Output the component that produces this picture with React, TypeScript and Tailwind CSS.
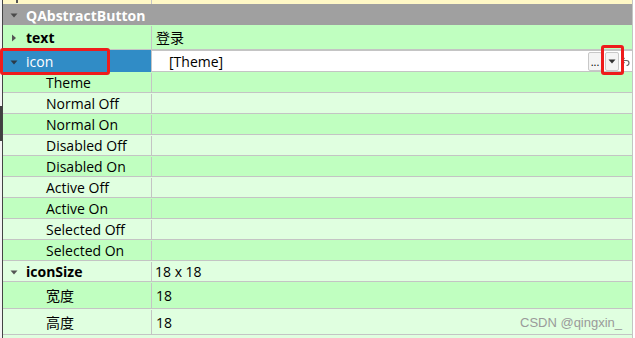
import React from "react";

type Arrow = "down" | "right" | null;

interface RowProps {
  label: string;
  value?: React.ReactNode;
  level?: number;
  bold?: boolean;
  dark?: boolean;
  arrow?: Arrow;
  h?: string;
}

const FONT = { fontFamily: '"Open Sans", "Noto Sans CJK SC", sans-serif' };

function Tri({ dir, color = "#555" }: { dir: "down" | "right"; color?: string }) {
  return (
    <svg width="8" height="8" viewBox="0 0 8 8" className="shrink-0">
      {dir === "down" ? (
        <path d="M0.5 2.5 L7.5 2.5 L4 6.5 Z" fill={color} />
      ) : (
        <path d="M2 0.5 L6 4 L2 7.5 Z" fill={color} />
      )}
    </svg>
  );
}

function Row({ label, value, level = 0, bold, dark, arrow = null, h = "h-[21px]" }: RowProps) {
  const bg = dark ? "bg-[#c0ffc0]" : "bg-[#e0ffe0]";
  return (
    <div className={`flex ${h} ${bg} border-b border-[#c4c4c4] pt-[1px] text-[14px] text-black`}>
      <div
        className={`flex w-[149px] shrink-0 items-center border-r border-[#c4c4c4] ${
          level === 0 ? "pl-[7px]" : "pl-[43px]"
        }`}
      >
        {level === 0 && (
          <span className="flex w-[16px] items-center">{arrow && <Tri dir={arrow} />}</span>
        )}
        <span className={bold ? "font-bold" : ""}>{label}</span>
      </div>
      <div className="flex flex-1 items-center pl-[3px]">{value}</div>
    </div>
  );
}

const iconStates = [
  "Theme",
  "Normal Off",
  "Normal On",
  "Disabled Off",
  "Disabled On",
  "Active Off",
  "Active On",
  "Selected Off",
  "Selected On",
];

export default function App() {
  return (
    <div className="relative flex h-[338px] w-[635px] overflow-hidden bg-white" style={FONT}>
      {/* left gutter */}
      <div className="flex w-[2px] shrink-0 flex-col bg-[#f4f4f4]">
        <div className="mt-[106px] h-[35px] bg-[#404040]" />
      </div>

      <div className="flex w-[631px] shrink-0 flex-col border-l border-r border-[#444] border-r-[#c4c4c4] bg-[#e0ffe0]">
        {/* partial row above */}
        <div className="flex h-[4px] bg-[#fff8c6]">
          <div className="w-[149px] border-r border-[#c4c4c4] pl-[13px]">
            <div className="h-[3px] w-[2px] bg-[#555]" />
          </div>
        </div>

        {/* group header */}
        <div className="flex h-[21px] items-center bg-[#a0a0a0] pl-[7px] pt-[1px] text-[14px] font-bold text-white">
          <span className="flex w-[16px] items-center">
            <Tri dir="down" color="#4a4a4a" />
          </span>
          QAbstractButton
        </div>

        <Row label="text" bold dark arrow="right" h="h-[25px]" value={<span className="pl-[1px]">登录</span>} />

        {/* selected icon row */}
        <div className="flex h-[22px] text-[14px]">
          <div className="flex w-[149px] shrink-0 items-center border-r border-[#c4c4c4] bg-[#308cc6] pl-[7px] pt-[1px] text-white">
            <span className="flex w-[16px] items-center">
              <Tri dir="down" color="#2b3a48" />
            </span>
            icon
          </div>
          <div className="flex flex-1 items-center border-y border-[#c4c4c4] bg-white text-black">
            <span className="ml-[17px] flex-1 pt-[1px]">[Theme]</span>
            <div className="flex h-[19px] w-[14px] items-end justify-center rounded-[2px] border border-[#c8c8c8] bg-[#f4f4f4] pb-[3px] text-[11px] leading-none">
              ...
            </div>
            <div className="ml-[3px] flex h-[19px] w-[14px] items-center justify-center rounded-[2px] border border-[#c8c8c8] bg-[#f4f4f4]">
              <Tri dir="down" color="#333" />
            </div>
            <div className="flex w-[13px] items-center justify-center">
              <svg width="9" height="9" viewBox="0 0 9 9">
                <path d="M1 3.5 L3.5 1 M1 3.5 L3.5 6 M1 3.5 H5.5 A2.5 2.5 0 0 1 5.5 8.5" stroke="#666" strokeWidth="1.2" fill="none" />
              </svg>
            </div>
          </div>
        </div>

        {iconStates.map((s, i) => (
          <Row key={s} label={s} level={1} dark={i % 2 === 0} />
        ))}

        <Row label="iconSize" bold arrow="down" value={<span>18 x 18</span>} />
        <Row label="宽度" level={1} dark h="h-[27px]" value={<span className="pl-[1px]">18</span>} />
        <Row label="高度" level={1} h="h-[26px]" value={<span className="pl-[1px]">18</span>} />
      </div>

      {/* annotation boxes */}
      <div className="absolute left-0 top-[48px] h-[27px] w-[110px] rounded-[3px] border-[3px] border-[#ee1c1c]" />
      <div className="absolute left-[601px] top-[45px] h-[30px] w-[23px] rounded-[3px] border-[3px] border-[#ee1c1c]" />

      <div
        className="absolute left-[520px] top-[313px] text-[13px] text-[#9a9a9a]"
        style={{ fontFamily: '"Liberation Sans", sans-serif' }}
      >
        CSDN @qingxin_
      </div>
    </div>
  );
}
